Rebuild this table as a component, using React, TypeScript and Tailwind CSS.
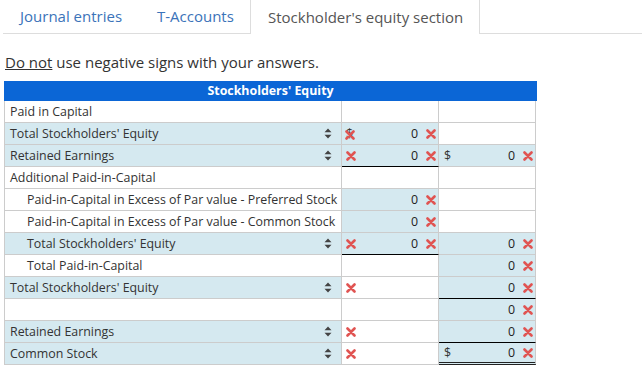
import React from 'react';

type Cell = {
  blue?: boolean;
  mark?: 'x' | 'dollarx' | 'dollar';
  value?: string;
  line?: 'single' | 'double';
};

interface Row {
  label: string;
  indent?: boolean;
  select?: boolean;
  c2: Cell;
  c3: Cell;
}

const ROWS: Row[] = [
  { label: 'Paid in Capital', c2: {}, c3: {} },
  { label: "Total Stockholders' Equity", select: true, c2: { blue: true, mark: 'dollarx', value: '0' }, c3: {} },
  { label: 'Retained Earnings', select: true, c2: { blue: true, mark: 'x', value: '0', line: 'single' }, c3: { blue: true, mark: 'dollar', value: '0' } },
  { label: 'Additional Paid-in-Capital', c2: {}, c3: {} },
  { label: 'Paid-in-Capital in Excess of Par value - Preferred Stock', indent: true, c2: { blue: true, value: '0' }, c3: {} },
  { label: 'Paid-in-Capital in Excess of Par value - Common Stock', indent: true, c2: { blue: true, value: '0' }, c3: {} },
  { label: "Total Stockholders' Equity", indent: true, select: true, c2: { blue: true, mark: 'x', value: '0', line: 'single' }, c3: { blue: true, value: '0' } },
  { label: 'Total Paid-in-Capital', indent: true, c2: {}, c3: { blue: true, value: '0' } },
  { label: "Total Stockholders' Equity", select: true, c2: { mark: 'x' }, c3: { blue: true, value: '0', line: 'single' } },
  { label: '', c2: {}, c3: { blue: true, value: '0' } },
  { label: 'Retained Earnings', select: true, c2: { mark: 'x' }, c3: { blue: true, value: '0', line: 'single' } },
  { label: 'Common Stock', select: true, c2: { mark: 'x' }, c3: { blue: true, mark: 'dollar', value: '0', line: 'double' } },
];

function RedX() {
  return (
    <svg width="10" height="10" viewBox="0 0 10 10" className="shrink-0">
      <path d="M1.5 1.5 L8.5 8.5 M8.5 1.5 L1.5 8.5" stroke="#e05452" strokeWidth="2.6" strokeLinecap="round" />
    </svg>
  );
}

function SortIcon() {
  return (
    <svg width="8" height="11" viewBox="0 0 8 11" className="shrink-0">
      <path d="M4 0.5 L7.5 4.3 L0.5 4.3 Z M0.5 6.7 L7.5 6.7 L4 10.5 Z" fill="#444" />
    </svg>
  );
}

function ValueCell({ cell }: { cell: Cell }) {
  const bottom =
    cell.line === 'single'
      ? 'border-b border-b-black'
      : cell.line === 'double'
      ? 'border-b-[3px] border-double border-b-[#222]'
      : 'border-b border-b-[#cccccc]';
  return (
    <div
      className={`relative flex items-center pl-[4px] pr-[2px] border-r border-r-[#cccccc] ${bottom} ${
        cell.blue ? 'bg-[#d5e9f0]' : 'bg-white'
      }`}
    >
      {cell.mark === 'x' && <RedX />}
      {cell.mark === 'dollar' && <span className="text-[#333] ml-[1px]">$</span>}
      {cell.mark === 'dollarx' && (
        <span className="relative text-[#333]">
          $
          <span className="absolute left-[-1px] top-[4px]">
            <RedX />
          </span>
        </span>
      )}
      <span className="ml-auto text-[#222]">{cell.value}</span>
      {cell.value && (
        <span className="ml-[8px]">
          <RedX />
        </span>
      )}
    </div>
  );
}

export default function App() {
  return (
    <div className="w-[642px] h-[369px] bg-white overflow-hidden" style={{ fontFamily: '"Open Sans", sans-serif' }}>
      {/* Tabs */}
      <div className="flex h-[34px] pl-[3px]">
        <div className="w-[137px] flex items-center pl-[17px] border-b border-[#dddddd] text-[15px] text-[#3b73b9]">Journal entries</div>
        <div className="w-[110px] flex items-center pl-[17px] border-b border-[#dddddd] text-[15px] text-[#3b73b9]">T-Accounts</div>
        <div className="w-[230px] flex items-center pl-[17px] border-x border-[#dddddd] text-[15px] text-[#555]">Stockholder's equity section</div>
        <div className="flex-1 border-b border-[#dddddd]" />
      </div>

      <p className="mt-[18px] ml-[5px] text-[15px] leading-[20px] text-[#333]">
        <span className="underline">Do not</span> use negative signs with your answers.
      </p>

      {/* Table */}
      <div className="mt-[9px] ml-[4px] w-[533px] text-[12.4px] leading-[16px]">
        <div className="h-[20px] bg-[#0b66d6] text-white font-bold flex items-center justify-center">Stockholders' Equity</div>
        <div className="border-l border-[#cccccc]">
          {ROWS.map((r, i) => (
            <div key={i} className="grid grid-cols-[337px_97px_97px] h-[22px]">
              <div
                className={`flex items-center pr-[9px] border-r border-b border-[#cccccc] ${r.indent ? 'pl-[22px]' : 'pl-[5px]'} ${
                  r.select ? 'bg-[#d5e9f0]' : 'bg-white'
                } text-[#333]`}
              >
                <span className="whitespace-nowrap">{r.label}</span>
                {r.select && (
                  <span className="ml-auto">
                    <SortIcon />
                  </span>
                )}
              </div>
              <ValueCell cell={r.c2} />
              <ValueCell cell={r.c3} />
            </div>
          ))}
        </div>
      </div>
    </div>
  );
}
